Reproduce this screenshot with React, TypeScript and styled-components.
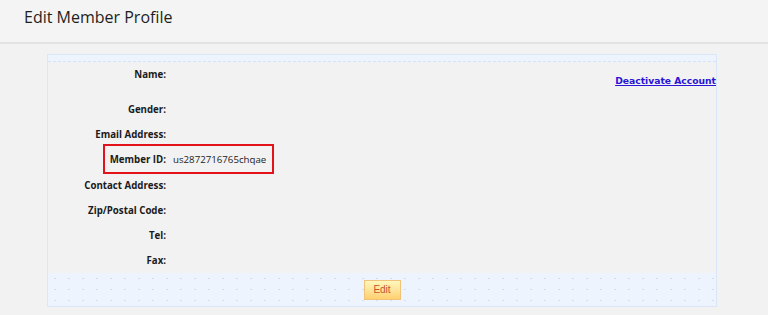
import React from 'react'
import styled, { createGlobalStyle } from 'styled-components'

const GlobalStyle = createGlobalStyle`
  html, body {
    margin: 0;
    padding: 0;
    background: #f2f2f2;
    font-family: 'Open Sans', 'Noto Sans', sans-serif;
  }
`

const Page = styled.div`
  width: 768px;
  height: 315px;
  overflow: hidden;
  background: #f2f2f2;
`

const Header = styled.div`
  height: 44px;
  padding-left: 24px;
  display: flex;
  align-items: center;
  background: #f4f4f4;
  border-bottom: 2px solid #e2e2e2;
  box-sizing: border-box;
  margin-bottom: 10px;

  h1 {
    margin: 0;
    font-size: 16px;
    font-weight: 400;
    color: #1e1e1e;
    padding-bottom: 8px;
  }
`

const Panel = styled.div`
  margin-left: 47px;
  width: 670px;
  box-sizing: border-box;
  border: 1px solid #dbe7f8;
  background: #f2f2f2;
`

const TopBand = styled.div`
  height: 6px;
  background: #eef4fd;
  border-bottom: 1px dashed #d6e3f6;
`

const Row = styled.div<{ $tall?: boolean }>`
  position: relative;
  display: flex;
  align-items: flex-start;
  height: ${({ $tall }) => ($tall ? '35px' : '25.2px')};
  line-height: 25px;
  font-size: 9.7px;
  color: #1a1a1a;
`

const Label = styled.div`
  width: 118px;
  text-align: right;
  font-weight: 700;
  flex-shrink: 0;
`

const Value = styled.div`
  margin-left: 7px;
  font-weight: 400;
  color: #222;
`

const DeactivateLink = styled.a`
  margin-left: auto;
  margin-top: 6px;
  font-family: 'DejaVu Sans', Verdana, sans-serif;
  font-size: 9.2px;
  font-weight: 700;
  color: #2a14d6;
  text-decoration: underline;
  cursor: pointer;
`

const Highlight = styled.div`
  position: absolute;
  left: 55px;
  top: -3px;
  width: 171px;
  height: 30px;
  box-sizing: border-box;
  border: 2px solid #e3131b;
  pointer-events: none;
`

const Footer = styled.div`
  height: 33px;
  display: flex;
  align-items: center;
  justify-content: center;
  background-color: #eef4fd;
  background-image: radial-gradient(#d3deef 0.5px, transparent 0.8px);
  background-size: 14px 11px;
`

const EditButton = styled.button`
  width: 37px;
  height: 20px;
  padding: 0;
  font-family: 'Liberation Sans', Arial, sans-serif;
  font-size: 10px;
  color: #c2562f;
  border: 1px solid #f0c27a;
  background: linear-gradient(#fff8bd, #ffdc8a 70%, #ffcf6e);
  cursor: pointer;
`

const fields: { label: string; value?: string; highlight?: boolean }[] = [
  { label: 'Gender:' },
  { label: 'Email Address:' },
  { label: 'Member ID:', value: 'us2872716765chqae', highlight: true },
  { label: 'Contact Address:' },
  { label: 'Zip/Postal Code:' },
  { label: 'Tel:' },
  { label: 'Fax:' },
]

const App: React.FC = () => {
  return (
    <Page>
      <GlobalStyle />
      <Header>
        <h1>Edit Member Profile</h1>
      </Header>
      <Panel>
        <TopBand />
        <Row $tall>
          <Label>Name:</Label>
          <DeactivateLink>Deactivate Account</DeactivateLink>
        </Row>
        {fields.map(f => (
          <Row key={f.label}>
            {f.highlight && <Highlight />}
            <Label>{f.label}</Label>
            {f.value && <Value>{f.value}</Value>}
          </Row>
        ))}
        <Footer>
          <EditButton>Edit</EditButton>
        </Footer>
      </Panel>
    </Page>
  )
}

export default App
